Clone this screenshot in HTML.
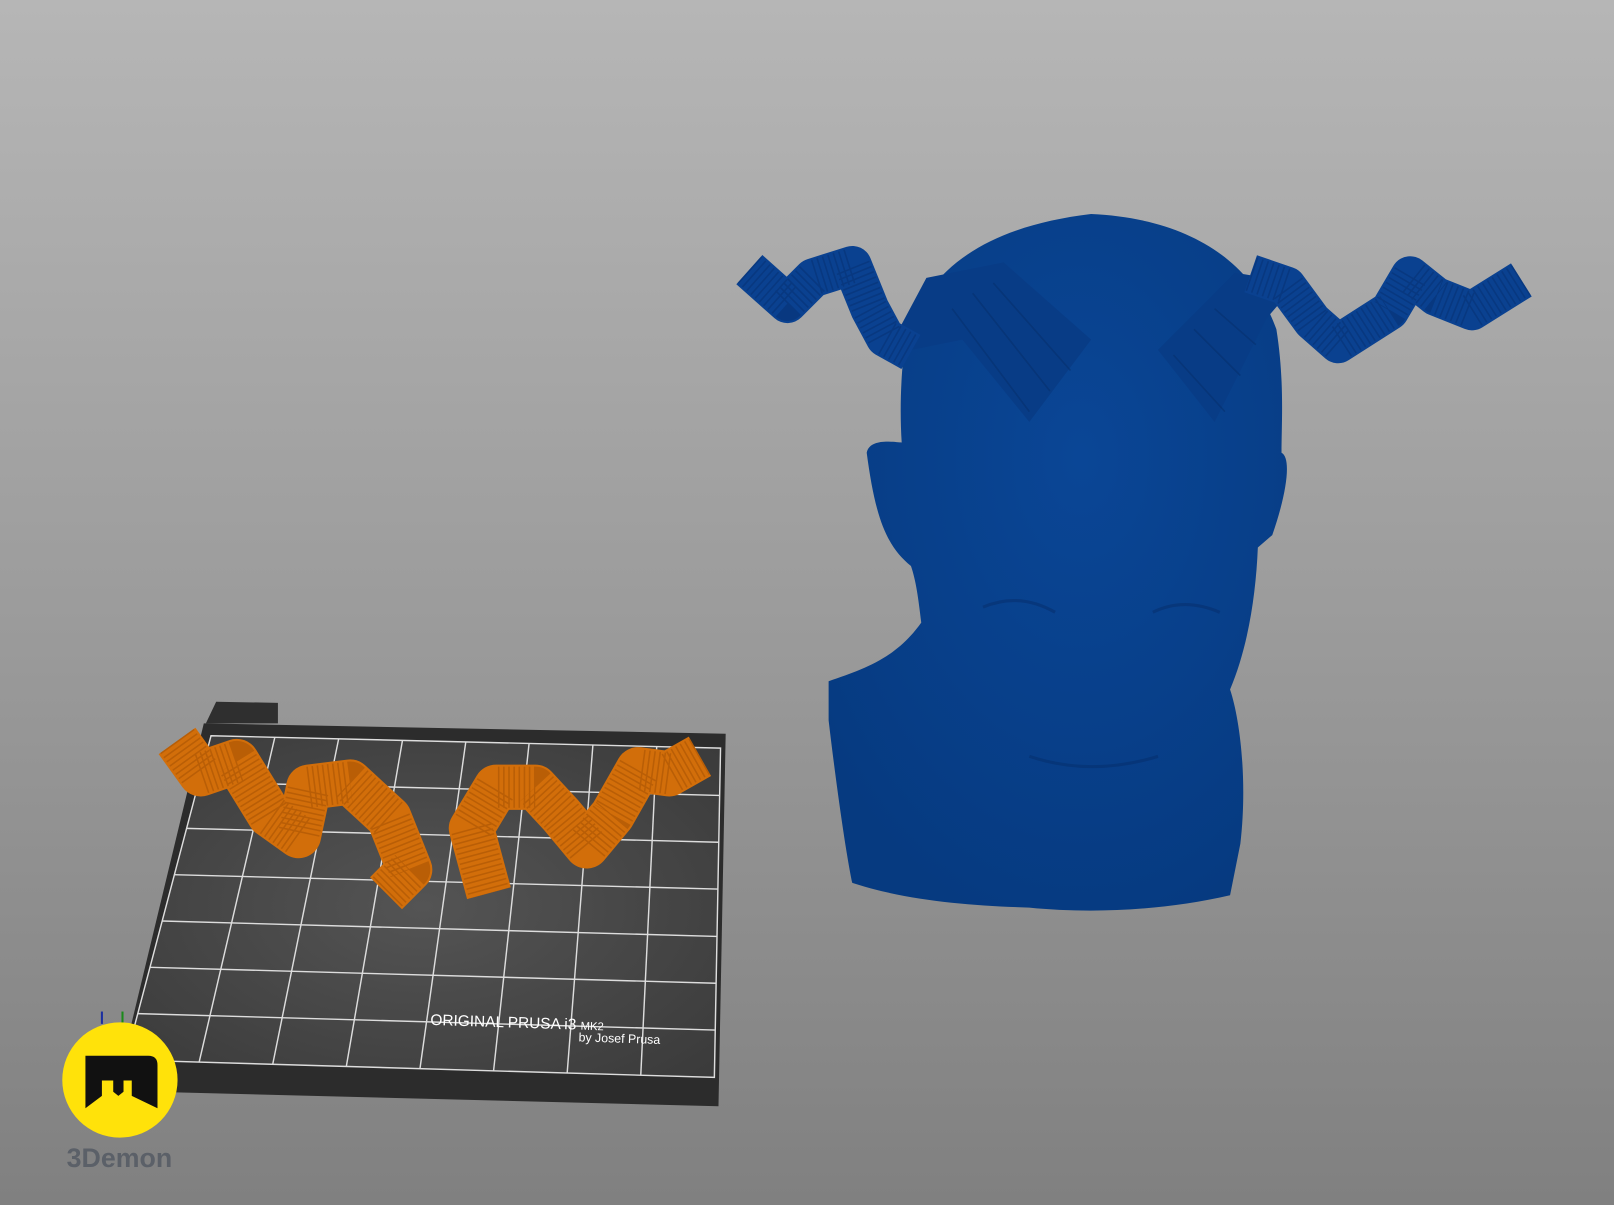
<!DOCTYPE html>
<html><head><meta charset="utf-8"><style>
html,body{margin:0;padding:0;width:1614px;height:1205px;overflow:hidden;background:#999}
svg{display:block}
</style></head><body>
<svg width="1614" height="1205" viewBox="0 0 1568 1171" preserveAspectRatio="none" xmlns="http://www.w3.org/2000/svg">
<defs>
<linearGradient id="bg" x1="0" y1="0" x2="0" y2="1">
<stop offset="0" stop-color="#b6b6b6"/><stop offset="0.5" stop-color="#9c9c9c"/><stop offset="1" stop-color="#808080"/>
</linearGradient>
<radialGradient id="bed" cx="0.5" cy="0.5" r="0.7">
<stop offset="0" stop-color="#545454"/><stop offset="1" stop-color="#3a3a3a"/>
</radialGradient>
<radialGradient id="hd" cx="0.55" cy="0.35" r="0.7">
<stop offset="0" stop-color="#0a4696"/><stop offset="1" stop-color="#063a80"/>
</radialGradient>
</defs>
<rect width="1568" height="1171" fill="url(#bg)"/>

<!-- bed -->
<polygon points="210,682 270,683 270,703 200,703" fill="#2f2f2f"/>
<polygon points="198,703 705,713 698,1075 112,1060" fill="#2c2c2c"/>
<polygon points="205,715 700,727 694,1047 122,1030" fill="url(#bed)"/>
<g stroke="#ddd" stroke-width="1.4" fill="none">
<polygon points="205,715 700,727 694,1047 122,1030"/>
<line x1="267" y1="716.5" x2="193.5" y2="1032"/>
<line x1="329" y1="718" x2="265" y2="1034"/>
<line x1="391" y1="719.5" x2="336.5" y2="1036"/>
<line x1="452.5" y1="721" x2="408" y2="1038.5"/>
<line x1="514" y1="722.5" x2="479.5" y2="1040.6"/>
<line x1="576" y1="724" x2="551" y2="1042.8"/>
<line x1="638" y1="725.5" x2="622.5" y2="1045"/>
<line x1="193" y1="760" x2="699" y2="773"/>
<line x1="181" y1="805" x2="698" y2="818.5"/>
<line x1="169" y1="850" x2="697" y2="864"/>
<line x1="157.6" y1="895" x2="696.6" y2="910"/>
<line x1="146" y1="940" x2="695.7" y2="955.5"/>
<line x1="134" y1="985" x2="695" y2="1001"/>
</g>
<text x="418" y="996" font-family="Liberation Sans, sans-serif" font-size="15" fill="#fff" transform="rotate(1.8 418 996)">ORIGINAL PRUSA i3 <tspan font-size="11">MK2</tspan></text>
<text x="562" y="1012" font-family="Liberation Sans, sans-serif" font-size="12" fill="#fff" transform="rotate(1.8 562 1012)">by Josef Prusa</text>
<line x1="99" y1="995" x2="99" y2="983" stroke="#1a2fa0" stroke-width="2"/>
<line x1="119" y1="995" x2="119" y2="983" stroke="#1a8a1a" stroke-width="2"/>

<!-- orange horns -->
<g fill="none" stroke-linejoin="round">
<path d="M172,720 L195,752 L230,740 L262,792 L290,812 L300,765 L340,760 L378,795 L398,845 L375,868" stroke="#d26e0a" stroke-width="44"/>
<path d="M680,735 L650,752 L620,748 L595,792 L570,822 L545,792 L520,765 L482,765 L458,805 L475,868" stroke="#d26e0a" stroke-width="44"/>
<path d="M172,720 L195,752 L230,740 L262,792 L290,812 L300,765 L340,760 L378,795 L398,845 L375,868" stroke="#a85304" stroke-width="40" stroke-dasharray="1.5 3.5" opacity="0.6"/>
<path d="M680,735 L650,752 L620,748 L595,792 L570,822 L545,792 L520,765 L482,765 L458,805 L475,868" stroke="#a85304" stroke-width="40" stroke-dasharray="1.5 3.5" opacity="0.6"/>
</g>

<!-- head -->
<path d="M880,330 C900,260 960,220 1060,208 C1150,212 1215,250 1240,320 C1248,370 1245,410 1245,440 C1255,445 1250,480 1236,520 L1222,532 C1220,580 1212,630 1195,670 C1205,700 1212,760 1205,820 L1195,870 C1130,885 1060,888 1000,882 C940,880 880,875 828,858 C822,830 812,760 805,700 L805,662 C840,650 870,640 895,605 C892,580 890,565 885,550 C860,530 850,500 842,440 C845,425 870,430 876,430 C874,400 875,360 880,330 Z" fill="url(#hd)"/>
<path d="M860,345 L900,270 L975,255 L1060,330 L1000,410 L935,330 Z" fill="#083c86"/>
<path d="M1125,340 L1200,265 L1260,275 L1230,310 L1180,410 Z" fill="#083c86"/>
<!-- blue horns -->
<g fill="none" stroke-linejoin="round">
<path d="M728,262 L765,295 L790,270 L828,258 L845,300 L860,328 L885,342" stroke="#0a4190" stroke-width="38"/>
<path d="M1478,272 L1430,302 L1395,288 L1370,268 L1350,302 L1300,334 L1275,312 L1250,278 L1215,266" stroke="#0a4190" stroke-width="38"/>
<path d="M728,262 L765,295 L790,270 L828,258 L845,300 L860,328 L885,342" stroke="#053070" stroke-width="34" stroke-dasharray="1.5 4" opacity="0.5"/>
<path d="M1478,272 L1430,302 L1395,288 L1370,268 L1350,302 L1300,334 L1275,312 L1250,278 L1215,266" stroke="#053070" stroke-width="34" stroke-dasharray="1.5 4" opacity="0.5"/>
</g>
<g fill="none" stroke="#052d6a" stroke-width="1.5" opacity="0.5">
<path d="M925,300 L1000,400 M945,285 L1020,380 M965,275 L1040,360 M1140,345 L1190,400 M1160,320 L1205,365 M1180,300 L1220,335"/>
</g>
<path d="M955,590 Q990,575 1025,595 M1120,595 Q1150,580 1185,595 M1000,735 Q1060,755 1125,735" stroke="#063070" stroke-width="3" fill="none" opacity="0.6"/>

<!-- logo -->
<circle cx="116.5" cy="1049.5" r="56" fill="#ffe20a"/>
<path d="M83,1026 H144 Q153,1026 153,1035 V1077 L128,1065 V1050 H120 V1061 L115,1065 L110,1061 V1050 H99 V1065 L83,1077 Z" fill="#111"/>
<text x="116" y="1134" text-anchor="middle" font-family="Liberation Sans, sans-serif" font-weight="bold" font-size="26" fill="#5b6068">3Demon</text>
</svg>
</body></html>
